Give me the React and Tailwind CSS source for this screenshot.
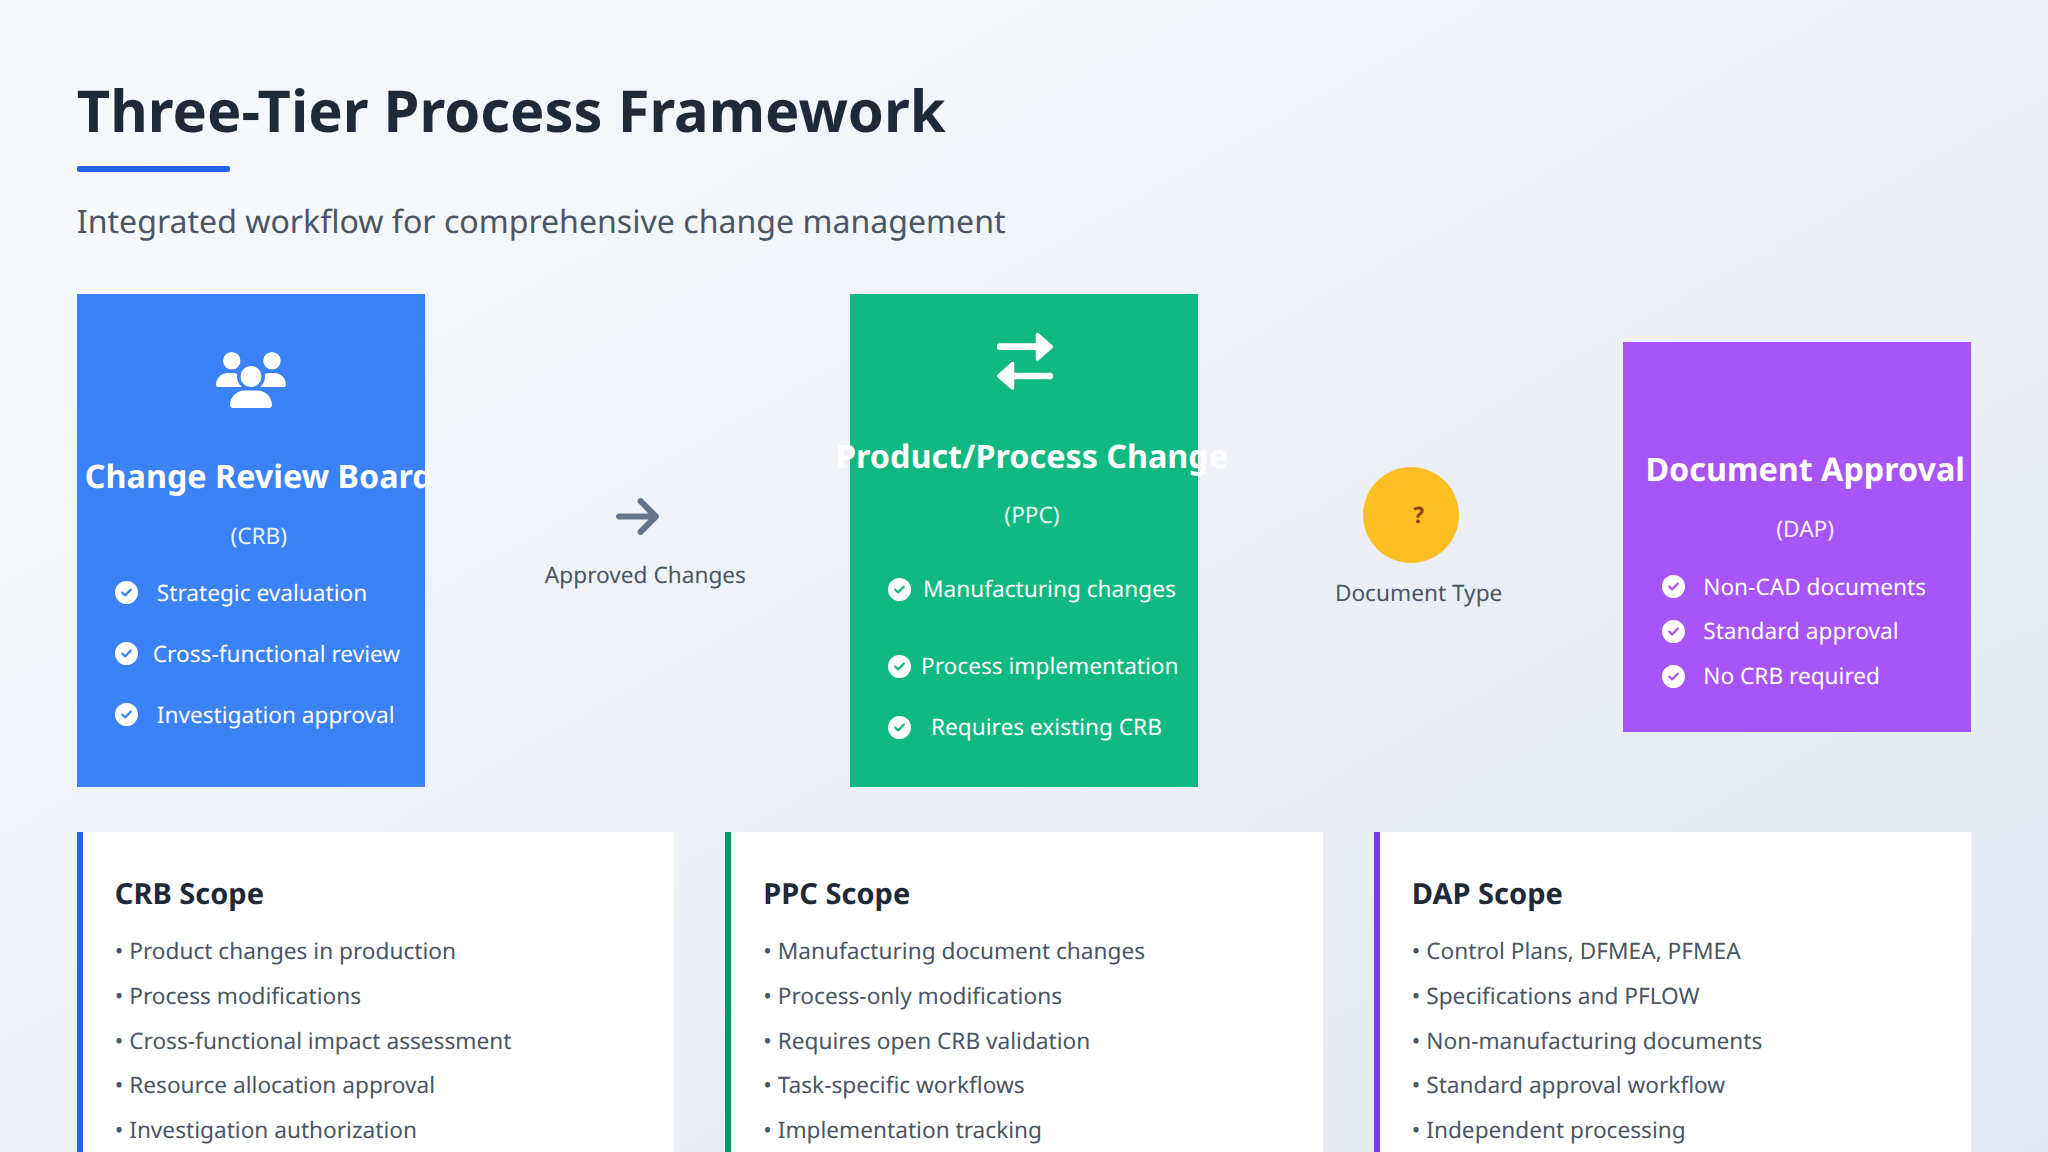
import React from "react";
import { FaUsers, FaCircleCheck, FaArrowRight } from "react-icons/fa6";

function SwapIcon() {
  return (
    <svg viewBox="0 0 56 58" className="w-[56px] h-[58px] ml-[2px]" fill="#fff" stroke="#fff" strokeLinejoin="round" strokeLinecap="round">
      <path d="M3 14.7H40" strokeWidth="6.7" fill="none" />
      <path d="M40.5 2.5L54.5 14.7L40.5 27Z" strokeWidth="3.5" />
      <path d="M53 44H16" strokeWidth="6.7" fill="none" />
      <path d="M15.5 31.5L1.5 44L15.5 56Z" strokeWidth="3.5" />
    </svg>
  );
}

function Row({ text, className, textClass }) {
  return (
    <div className={`flex items-center h-[32px] ${className}`}>
      <FaCircleCheck className="w-[23px] h-[23px] shrink-0 text-white" />
      <span className={`text-[22.65px] leading-[32px] whitespace-nowrap ${textClass}`}>{text}</span>
    </div>
  );
}

function Scope({ title, items, border }) {
  return (
    <div className={`bg-white border-l-[6.4px] ${border} pl-[32px] pt-[42px] h-[400px]`}>
      <h3 className="text-[29px] leading-[40px] font-bold text-[#1f2937] mb-[15px]">{title}</h3>
      <div>
        {items.map((t) => (
          <div key={t} className="text-[22.65px] leading-[44.8px] text-[#4b5563] whitespace-nowrap">• {t}</div>
        ))}
      </div>
    </div>
  );
}

export default function App() {
  return (
    <div className="w-[2048px] h-[1152px] overflow-hidden bg-gradient-to-br from-[#f8fafc] to-[#e3e8f1] pt-[71px] px-[76.8px] font-['Noto_Sans',sans-serif] [text-rendering:geometricPrecision]">
      <h1 className="text-[57.8px] leading-[78px] font-bold text-[#1f2937] whitespace-nowrap">Three-Tier Process Framework</h1>
      <div className="w-[153.6px] h-[6.4px] bg-[#2563eb] mt-[17px] rounded-[2px]" />
      <p className="text-[32.1px] leading-[44px] text-[#4b5563] mt-[28px] whitespace-nowrap">Integrated workflow for comprehensive change management</p>

      <div className="flex items-center mt-[49.6px] h-[493px]">
        <div className="w-[348px] h-[493px] shrink-0 bg-[#3b82f6] text-white flex flex-col pt-[57px]">
          <div className="flex justify-center"><FaUsers className="w-[70px] h-[58px]" /></div>
          <div className="flex flex-col items-center pl-[16px] mt-[44px]">
            <h2 className="text-[32.3px] leading-[46px] font-bold whitespace-nowrap">Change Review Board</h2>
            <p className="text-[22.65px] leading-[32px] opacity-90 mt-[21px]">(CRB)</p>
          </div>
          <div className="pl-[38px] mt-[25px]">
            <Row text="Strategic evaluation" textClass="ml-[19px]" />
            <Row text="Cross-functional review" textClass="ml-[15px]" className="mt-[29px]" />
            <Row text="Investigation approval" textClass="ml-[19px]" className="mt-[29px]" />
          </div>
        </div>

        <div className="flex-1 flex flex-col items-center text-[#4b5563] mt-[2px]">
          <FaArrowRight className="w-[49px] h-[49px] text-[#64748b]" />
          <span className="text-[22.65px] leading-[32px] mt-[18px] ml-[16px]">Approved Changes</span>
        </div>

        <div className="w-[348px] h-[493px] shrink-0 bg-[#10b981] text-white flex flex-col pt-[38px]">
          <div className="flex justify-center"><SwapIcon /></div>
          <div className="flex flex-col items-center pl-[16px] mt-[43px]">
            <h2 className="text-[32.3px] leading-[46px] font-bold whitespace-nowrap">Product/Process Change</h2>
            <p className="text-[22.65px] leading-[32px] opacity-90 mt-[20.5px]">(PPC)</p>
          </div>
          <div className="pl-[38px] mt-[42px]">
            <Row text="Manufacturing changes" textClass="ml-[12px]" />
            <Row text="Process implementation" textClass="ml-[10px]" className="mt-[45px]" />
            <Row text="Requires existing CRB" textClass="ml-[20px]" className="mt-[29px]" />
          </div>
        </div>

        <div className="flex-1 flex flex-col items-center text-[#4b5563] mb-[5px]">
          <div className="w-[96px] h-[96px] rounded-full bg-[#fbbf24] flex items-center justify-center pl-[16px] text-[#92400e] font-bold text-[22.65px]">?</div>
          <span className="text-[22.65px] leading-[32px] mt-[14px] ml-[16px]">Document Type</span>
        </div>

        <div className="w-[348px] h-[390px] shrink-0 bg-[#a855f7] text-white flex flex-col pt-[104px] mb-[6px]">
          <div className="flex flex-col items-center pl-[16px]">
            <h2 className="text-[32.3px] leading-[46px] font-bold whitespace-nowrap">Document Approval</h2>
            <p className="text-[22.65px] leading-[32px] opacity-90 mt-[20.5px]">(DAP)</p>
          </div>
          <div className="pl-[39px] mt-[26px]">
            <Row text="Non-CAD documents" textClass="ml-[18px]" />
            <Row text="Standard approval" textClass="ml-[18px]" className="mt-[12.4px]" />
            <Row text="No CRB required" textClass="ml-[18px]" className="mt-[12.8px]" />
          </div>
        </div>
      </div>

      <div className="grid grid-cols-3 gap-[51.2px] mt-[45px]">
        <Scope title="CRB Scope" border="border-[#2563eb]" items={["Product changes in production","Process modifications","Cross-functional impact assessment","Resource allocation approval","Investigation authorization"]} />
        <Scope title="PPC Scope" border="border-[#059669]" items={["Manufacturing document changes","Process-only modifications","Requires open CRB validation","Task-specific workflows","Implementation tracking"]} />
        <Scope title="DAP Scope" border="border-[#7c3aed]" items={["Control Plans, DFMEA, PFMEA","Specifications and PFLOW","Non-manufacturing documents","Standard approval workflow","Independent processing"]} />
      </div>
    </div>
  );
}
